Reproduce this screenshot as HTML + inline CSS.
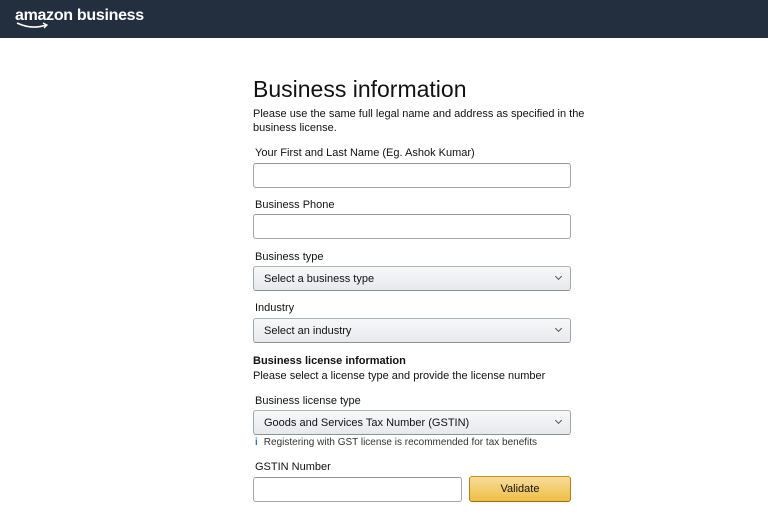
<!DOCTYPE html>
<html><head><meta charset="utf-8"><style>
*{margin:0;padding:0;box-sizing:border-box}
body{width:768px;height:517px;background:#fff;font-family:"Liberation Sans",sans-serif;color:#111;position:relative;overflow:hidden}
.hdr{position:absolute;left:0;top:0;width:768px;height:38px;background:#232f3e}
.logo{position:absolute;left:15px;top:7px;color:#fff;font-size:16px;font-weight:bold;letter-spacing:-0.3px}
.a{position:absolute;left:253px;font-size:11px;color:#111}
h1{position:absolute;left:253px;top:76px;font-size:23px;font-weight:normal;color:#111}
.in{position:absolute;left:253px;width:318px;height:25px;border:1px solid #a6a6a6;border-top-color:#949494;border-radius:3px;background:#fff}
.sel{position:absolute;left:253px;width:318px;height:25px;border:1px solid;border-color:#adb1b8 #a2a6ac #8d9096;border-radius:3px;background:linear-gradient(#f7f8fa,#e7e9ec);font-size:11px;padding:6px 0 0 10px;color:#111}
.sel:after{content:"";position:absolute;right:9px;top:7px;width:4px;height:4px;border-right:1.5px solid #555;border-bottom:1.5px solid #555;transform:rotate(45deg)}
.btn{position:absolute;left:469px;top:476px;width:102px;height:26px;border:1px solid;border-color:#c89411 #b0820f #99710d;border-radius:3px;background:linear-gradient(#f7dc9a,#efbe44);font-size:11px;text-align:center;padding-top:6px}
</style></head><body>
<div class="hdr"><div class="logo">amazon business</div>
<svg style="position:absolute;left:16px;top:22px" width="40" height="8"><path d="M1 1 Q16 8 30 3" stroke="#fff" stroke-width="1.6" fill="none"/><path d="M27 1 L31 3 L28 6" stroke="#fff" stroke-width="1.3" fill="none"/></svg></div>
<h1>Business information</h1>
<div class="a" style="top:107px;line-height:14px;width:345px">Please use the same full legal name and address as specified in the business license.</div>
<div class="a" style="top:147px;left:255px">Your First and Last Name (Eg. Ashok Kumar)</div>
<div class="in" style="top:163px"></div>
<div class="a" style="top:199px;left:255px">Business Phone</div>
<div class="in" style="top:214px"></div>
<div class="a" style="top:251px;left:255px">Business type</div>
<div class="sel" style="top:266px">Select a business type</div>
<div class="a" style="top:302px;left:255px">Industry</div>
<div class="sel" style="top:318px">Select an industry</div>
<div class="a" style="top:355px;font-weight:bold">Business license information</div>
<div class="a" style="top:370px">Please select a license type and provide the license number</div>
<div class="a" style="top:395px;left:255px">Business license type</div>
<div class="sel" style="top:410px">Goods and Services Tax Number (GSTIN)</div>
<div class="a" style="top:437px;left:255px;font-size:10px;color:#333"><span style="color:#2a79b8;font-weight:bold;margin-right:6px">i</span>Registering with GST license is recommended for tax benefits</div>
<div class="a" style="top:461px;left:255px">GSTIN Number</div>
<div class="in" style="top:477px;width:209px"></div>
<div class="btn">Validate</div>
</body></html>
